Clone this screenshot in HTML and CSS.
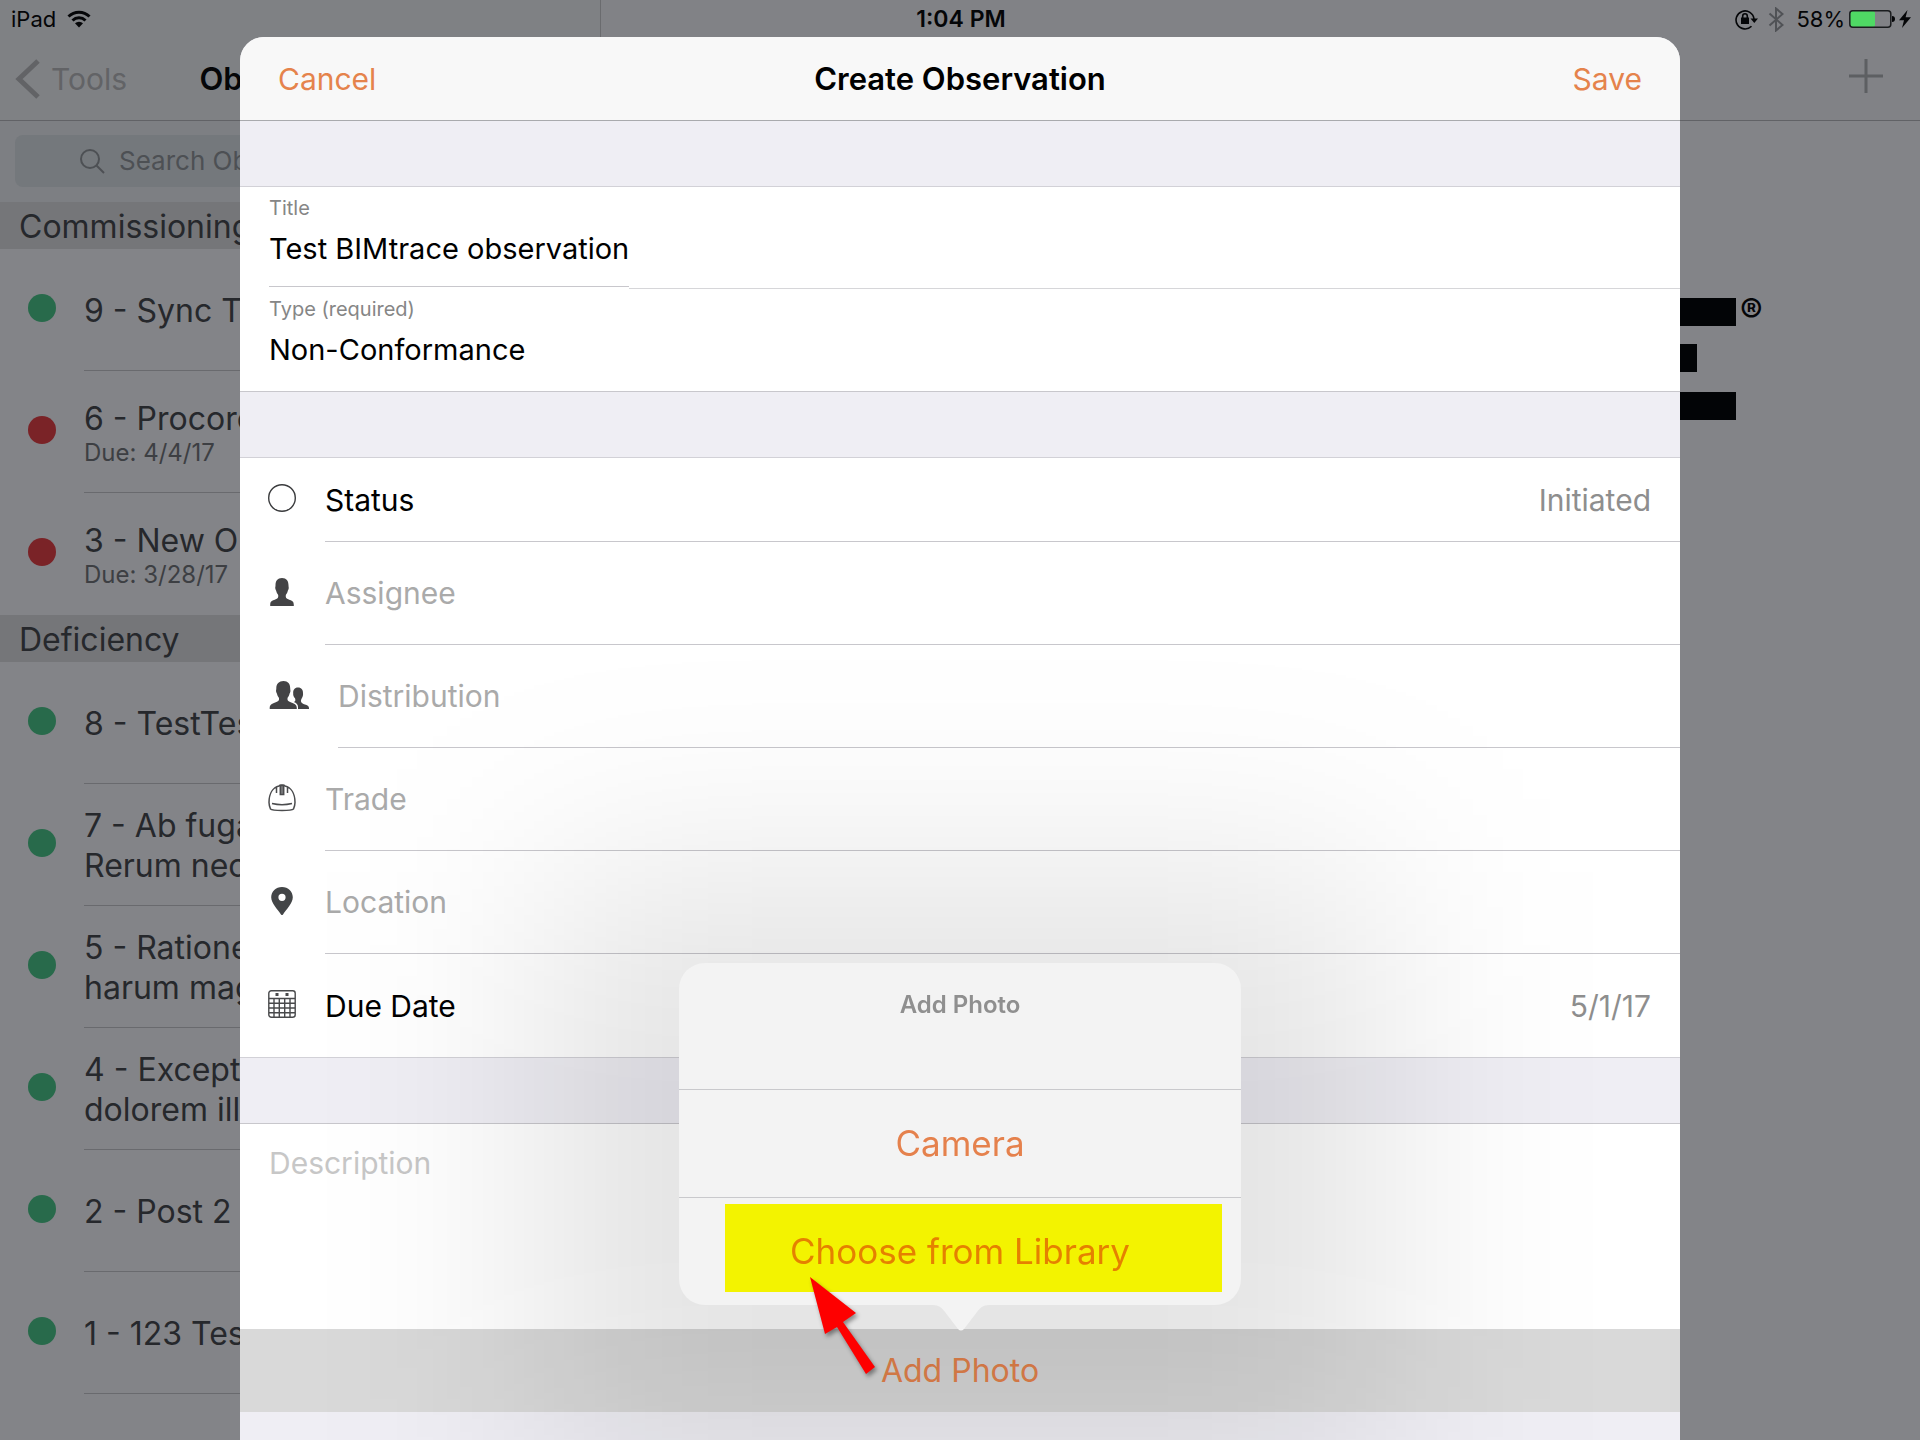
FILE: index.html
```html
<!DOCTYPE html>
<html lang="en">
<head>
<meta charset="utf-8">
<title>Create Observation</title>
<link rel="stylesheet" href="styles.css">
</head>
<body>
<div class="app">
  <header class="top">
    <div class="status-bar">
      <div class="status-left">
        <span>iPad</span>
        <svg width="24" height="18" viewBox="0 0 24 18" fill="none" stroke="#050608" stroke-width="3"><path d="M1.5 6.5a15 15 0 0 1 21 0M5.5 10.5a9.3 9.3 0 0 1 13 0"/><path d="M12 17.5l-4-4.200a5.700 5.700 0 0 1 8 0z" fill="#050608" stroke="none"/></svg>
      </div>
      <div class="status-time">1:04 PM</div>
      <div class="status-right">
        <svg width="23" height="22" viewBox="0 0 23 22" fill="none" stroke="#050608" stroke-width="1.600"><path d="M16.500 18.200A9 9 0 1 1 19 11"/><path d="M15.500 10.500h7.500l-3.700 4.500z" fill="#050608" stroke="none"/><path d="M6 9.500h8v6.500H6z" fill="#050608" stroke="none"/><path d="M7.700 10V8a2.300 2.300 0 0 1 4.600 0v2" stroke-width="1.600"/></svg>
        <svg width="16" height="25" viewBox="0 0 16 25" fill="none" stroke="#505256" stroke-width="2"><path d="M1.500 6.500l13 11.500L8 23.500v-22L14.500 7l-13 11.500"/></svg>
        <span class="percent">58%</span>
        <svg width="46" height="18" viewBox="0 0 46 18"><rect x="1" y="1" width="25" height="16" rx="2" fill="#4fd964"/><rect x=".8" y=".8" width="41" height="16.400" rx="3" fill="none" stroke="#1b1d1f" stroke-width="1.500"/><path d="M43 6q3 0 3 3t-3 3z" fill="#050608"/></svg>
        <svg width="12" height="18" viewBox="0 0 12 18"><path d="M8.500 0L0 10.300h5L3 18l9-10.800H6.600z" fill="#050608"/></svg>
      </div>
    </div>
    <nav class="nav">
      <div class="nav-side">
        <button class="back" type="button">
          <svg width="26" height="40" viewBox="0 0 26 40" fill="none" stroke="currentColor" stroke-width="5"><path d="M23 2L4 20l19 18"/></svg>
          <span>Tools</span>
        </button>
        <h2 class="nav-title">Observations</h2>
      </div>
      <button class="add" type="button" aria-label="Add"><svg width="34" height="34" viewBox="0 0 34 34" stroke="#5d5f62" stroke-width="3"><path d="M17 0v34M0 17h34"/></svg></button>
    </nav>
  </header>
  <div class="panes">
    <aside class="sidebar">
      <div class="search">
        <label class="search-box">
          <svg width="25" height="25" viewBox="0 0 25 25" fill="none" stroke="#4d5054" stroke-width="2"><circle cx="10" cy="10" r="9"/><path d="M16.500 16.500l7.500 7.500"/></svg>
          <input type="search" placeholder="Search Observations" aria-label="Search Observations">
        </label>
      </div>
      <h3 class="group">Commissioning</h3>
      <ul class="list">
        <li class="item"><span class="dot"></span><div class="item-body"><p>9 - Sync T</p></div></li>
        <li class="item"><span class="dot late"></span><div class="item-body"><p>6 - Procore</p><small>Due: 4/4/17</small></div></li>
        <li class="item"><span class="dot late"></span><div class="item-body last"><p>3 - New Obs</p><small>Due: 3/28/17</small></div></li>
      </ul>
      <h3 class="group">Deficiency</h3>
      <ul class="list">
        <li class="item"><span class="dot"></span><div class="item-body"><p>8 - TestTest</p></div></li>
        <li class="item"><span class="dot"></span><div class="item-body"><p>7 - Ab fuga<br>Rerum nec</p></div></li>
        <li class="item"><span class="dot"></span><div class="item-body"><p>5 - Ratione<br>harum magni</p></div></li>
        <li class="item"><span class="dot"></span><div class="item-body"><p>4 - Excepturi<br>dolorem illum</p></div></li>
        <li class="item"><span class="dot"></span><div class="item-body"><p>2 - Post 2</p></div></li>
        <li class="item"><span class="dot"></span><div class="item-body"><p>1 - 123 Test</p></div></li>
      </ul>
    </aside>
    <main class="detail">
      <div class="brand"><span class="bar wide"></span><span class="reg">®</span></div>
      <span class="bar short"></span>
      <span class="bar wide"></span>
    </main>
  </div>
</div>

<form class="modal">
  <header class="modal-head">
    <button type="button" class="link">Cancel</button>
    <h1>Create Observation</h1>
    <button type="button" class="link">Save</button>
  </header>
  <div class="spacer"></div>
  <div class="title-row">
    <div class="title-field">
      <label for="title">Title</label>
      <input id="title" type="text" value="Test BIMtrace observation">
    </div>
    <div class="title-rest"></div>
  </div>
  <div class="type-row">
    <label for="type">Type (required)</label>
    <input id="type" type="text" value="Non-Conformance">
  </div>
  <div class="spacer"></div>
  <section class="rows">
    <div class="row compact">
      <svg width="28" height="28" viewBox="0 0 28 28"><circle cx="14" cy="14" r="13.300" fill="none" stroke="#3a3b3d" stroke-width="1.400"/></svg>
      <div class="row-body"><label for="status">Status</label><input id="status" class="value" type="text" value="Initiated"></div>
    </div>
    <div class="row">
      <svg width="28" height="28" viewBox="0 0 28 28" fill="#434345"><path d="M14 0c4.500 0 6.500 3 6.500 7.200 0 1.500.4 1.800.2 3.300-.2 1.300-.8 1.500-1 2.700-.4 1.700-1.400 2.800-1.900 3.800-.3 2.600.4 3.600 3 4.600 3 1.200 5 1.600 5 5.400v1H2.200v-1c0-3.800 2-4.200 5-5.400 2.600-1 3.300-2 3-4.600-.5-1-1.500-2.100-1.900-3.800-.2-1.200-.8-1.400-1-2.700-.2-1.500.2-1.800.2-3.300C7.500 3 9.500 0 14 0z"/></svg>
      <div class="row-body"><input type="text" placeholder="Assignee" aria-label="Assignee"></div>
    </div>
    <div class="row">
      <svg width="41" height="28" viewBox="0 0 41 28" fill="#434345"><path d="M15.500 0c4.500 0 6.700 3 6.700 7.200 0 1.500.4 1.800.2 3.300-.2 1.300-.8 1.500-1 2.700-.4 1.700-1.400 2.800-1.900 3.800-.3 2.600.6 3.300 3.200 4.300 3.400 1.400 6.100 2 6.100 5.700v1H1.700v-1c0-3.700 2.700-4.300 6.100-5.700 2.600-1 3.500-1.700 3.200-4.300-.5-1-1.500-2.100-1.900-3.800-.2-1.200-.8-1.400-1-2.700-.2-1.500.2-1.800.2-3.300C8.300 3 11 0 15.500 0z"/><path d="M30 6.500c3.500 0 5.200 2.500 5 5.700.3 2-.4 3.800-1.200 5-.7 1.300-1 2-.8 3.300.3 1.700 1.900 2.200 3.900 2.900 2.400.8 4.100 1.600 4.100 3.600v1H30v-2c0-2.500-1.600-3.900-4.200-4.900 1.600-.7 1.900-2 1.200-3.900-1.300-1.300-2-3-1.800-5-.2-3.200 1.300-5.700 4.800-5.700z"/></svg>
      <div class="row-body"><input type="text" placeholder="Distribution" aria-label="Distribution"></div>
    </div>
    <div class="row">
      <svg width="28" height="28" viewBox="0 0 28 28" fill="none" stroke="#4b4c4e" stroke-width="1.500"><path d="M1 18.500C1 9.500 5 3.500 11 2c1-1.500 5-1.500 6 0 6 1.500 10 7.500 10 16.500 0 2-.5 4-1.500 6.500-2 2-21 2-23 0-1-2.500-1.500-4.500-1.500-6.500zM4 19.500c6 1.400 14 1.400 20 0M8.500 3.500V9M19.500 3.500V9"/><path d="M12.300 1.500h3.400v9h-3.400z" fill="#77787a"/></svg>
      <div class="row-body"><input type="text" placeholder="Trade" aria-label="Trade"></div>
    </div>
    <div class="row">
      <svg width="28" height="28" viewBox="0 0 28 28"><path fill="#434547" fill-rule="evenodd" d="M14 0c6.200 0 10.800 4.500 10.800 10.300 0 6-6.600 12.200-9.800 17.200q-1 1-2 0C9.800 22.500 3.200 16.300 3.200 10.300 3.200 4.500 7.800 0 14 0zm0 6.700a3.600 3.600 0 1 0 0 7.200 3.600 3.600 0 0 0 0-7.200z"/></svg>
      <div class="row-body"><input type="text" placeholder="Location" aria-label="Location"></div>
    </div>
    <div class="row">
      <svg width="28" height="28" viewBox="0 0 28 28" fill="none" stroke="#48494b" stroke-width="1.400"><rect x=".8" y=".8" width="26.400" height="26.400" rx="2.500"/><path d="M1 8.500h26M1 13.200h26M1 18h26M1 22.700h26M6 8.500V27M11.300 8.500V27M16.700 8.500V27M22 8.500V27"/><path d="M7.500 4.500h3M17.500 4.500h3" stroke-width="3"/></svg>
      <div class="row-body last"><label for="due">Due Date</label><input id="due" class="value" type="text" value="5/1/17"></div>
    </div>
  </section>
  <div class="spacer"></div>
  <textarea class="description" placeholder="Description" aria-label="Description"></textarea>
  <div class="photo">
    <button type="button" class="photo-button">Add Photo</button>
    <div class="popover-shadow"></div>
    <div class="popover" role="dialog" aria-label="Add Photo">
      <h2>Add Photo</h2>
      <button type="button">Camera</button>
      <button type="button" class="library">Choose from Library<span class="highlight"></span></button>
      <svg class="tail" width="56" height="26" viewBox="0 0 56 26"><path d="M0 0h56c-6 0-9 3-12 7L31 24q-3 3-6 0L12 7C9 3 6 0 0 0z" fill="#f3f3f3"/></svg>
      <svg class="pointer" width="72" height="104" viewBox="0 0 72 104"><path d="M0 0l46 36-13 9 32 45-9 7-29-47-12 7z" fill="#fe0000"/></svg>
    </div>
  </div>
</form>
</body>
</html>
```
FILE: styles.css
```css
* { box-sizing: border-box; }

body {
  margin: 0;
  min-height: 100vh;
  position: relative;
  overflow: hidden;
  background: #838488;
  color: #26282c;
  font-family: Inter, "Liberation Sans", sans-serif;
  font-size: 30px;
  line-height: 40px;
}

h1, h2, h3, p, ul { margin: 0; padding: 0; font-weight: 400; }
ul { list-style: none; }
svg { display: block; flex: none; }

button, input, textarea {
  margin: 0;
  padding: 0;
  border: 0;
  background: none;
  font: inherit;
  color: inherit;
  outline: 0;
}

/* Dimmed page behind the sheet */
.top {
  height: 121px;
  background: linear-gradient(to right, #7f8184 600px, #6a6b6e 600px, #6a6b6e 601px, #818286 601px);
  border-bottom: 1px solid #616266;
}

.status-bar {
  display: grid;
  grid-template-columns: 1fr auto 1fr;
  align-items: center;
  height: 38px;
  padding: 0 9px 0 11px;
  font-size: 22px;
  line-height: 28px;
  color: #050608;
}
.status-left, .status-right { display: flex; align-items: center; gap: 11px; }
.status-right { justify-content: flex-end; gap: 4px; }
.status-right .percent { margin-left: 8px; }
.status-right svg:first-child { margin-right: 6px; }
.status-time { font-size: 23px; font-weight: 600; }

.nav { display: flex; justify-content: space-between; align-items: center; height: 82px; }
.nav-side { display: grid; grid-template-columns: 1fr auto 1fr; align-items: center; width: 600px; }
.back { display: flex; align-items: center; gap: 10px; padding-left: 15px; color: #626366; }
.nav-title { font-size: 31px; font-weight: 600; color: #050608; }
.add { padding: 0 37px 6px 0; }

.panes { display: flex; }
.sidebar { width: 600px; }
.search { padding: 14px 15px 15px; background: #7d7f83; }
.search-box {
  display: flex;
  align-items: center;
  gap: 14px;
  height: 52px;
  padding-left: 65px;
  border-radius: 8px;
  background: #74787c;
}
.search-box input { flex: 1; font-size: 26px; }
.search-box input::placeholder { color: #4d5054; opacity: 1; }

.group { height: 47px; padding: 0 19px; font-size: 32px; line-height: 50px; background: #757679; }
.item { display: flex; align-items: center; gap: 28px; padding-left: 28px; }
.dot { width: 28px; height: 28px; border-radius: 50%; background: #286a4b; margin-bottom: 4px; }
.dot.late { background: #7a2327; }
.item-body {
  flex: 1;
  display: flex;
  flex-direction: column;
  justify-content: center;
  height: 122px;
  padding-top: 2px;
  border-bottom: 1px solid #696a6e;
  font-size: 32px;
  white-space: nowrap;
}
.item-body.last { border-bottom: 0; }
.item-body small { font-size: 24px; line-height: 28px; color: #3d3f43; }

.detail { display: flex; flex-direction: column; align-items: flex-start; gap: 20px; padding: 177px 0 0 800px; }
.brand { display: flex; gap: 4px; height: 26px; }
.bar { width: 297px; height: 28px; background: #020406; }
.bar.wide { width: 336px; }
.reg { font-size: 34px; line-height: 26px; font-weight: 600; color: #050608; }

/* Sheet */
.modal {
  position: absolute;
  top: 37px;
  left: 12.5%;
  right: 12.5%;
  min-height: calc(100vh - 37px);
  overflow: hidden;
  border-radius: 24px 24px 0 0;
  background: #efeef4;
  color: #000;
}
.modal-head {
  display: grid;
  grid-template-columns: 1fr auto 1fr;
  align-items: center;
  height: 84px;
  padding: 0 38px;
  background: #f8f8f8;
  border-bottom: 1px solid #a9aaad;
}
.modal-head h1 { font-size: 31px; font-weight: 600; }
.link { justify-self: start; color: #e5834c; }
.link:last-child { justify-self: end; }

.spacer { height: 65px; }
.title-row, .type-row, .rows { background: #fff; }

label, input { display: block; }
.title-row { display: flex; padding-left: 29px; height: 103px; border-top: 1px solid #d2d1d7; }
.title-field { width: 360px; height: 100px; padding-top: 9px; border-bottom: 1px solid #c8c7cc; }
.title-rest { flex: 1; border-bottom: 1px solid #d6d6d9; }
.type-row { height: 103px; padding: 8px 29px 0; border-bottom: 1px solid #c8c7cc; }
.title-field label, .type-row label { font-size: 20px; line-height: 24px; color: #868686; }
.title-field input, .type-row input { width: 100%; height: 40px; margin-top: 9px; font-size: 29px; }

.rows { border: solid #d2d1d7; border-width: 1px 0; }
.row { display: flex; align-items: center; gap: 29px; height: 103px; padding-left: 28px; }
.row.compact { height: 84px; }
.row > svg { margin-bottom: 4px; }
.row-body {
  flex: 1;
  display: flex;
  align-items: center;
  justify-content: space-between;
  align-self: stretch;
  padding-right: 29px;
  border-bottom: 1px solid #c8c7cc;
}
.row-body.last { border-bottom: 0; }
.row-body input { flex: 1; min-width: 0; }
.row-body input::placeholder { color: #aaa; opacity: 1; }
.row-body .value { text-align: right; color: #8e8e8e; }

.description {
  display: block;
  width: 100%;
  height: 206px;
  padding: 19px 29px;
  border-top: 1px solid #c8c7cc;
  background: #fff;
  resize: none;
}
.description::placeholder { color: #c7c7c7; opacity: 1; }

.photo { position: relative; }
.photo-button { display: block; width: 100%; height: 83px; background: #d9d9d9; font-size: 32px; color: #e5834c; }

.popover-shadow {
  position: absolute;
  bottom: -60px;
  left: 50%;
  width: 842px;
  height: 600px;
  margin-left: -421px;
  background: rgba(0, 0, 0, .11);
  filter: blur(110px);
  pointer-events: none;
}
.popover {
  position: absolute;
  z-index: 1;
  bottom: calc(100% + 24px);
  left: 50%;
  width: 562px;
  margin-left: -281px;
  border-radius: 26px;
  background: #f3f3f3;
}
.popover h2 { height: 126px; padding-top: 22px; font-size: 24px; font-weight: 600; color: #8f8f8f; text-align: center; }
.popover button {
  position: relative;
  display: block;
  width: 100%;
  height: 108px;
  padding-bottom: 2px;
  border-top: 1px solid #c9c9cc;
  font-size: 35px;
  color: #e5814c;
}
.highlight {
  position: absolute;
  inset: 6px 19px 13px 46px;
  background: #ff0;
  mix-blend-mode: multiply;
}
.tail { position: absolute; top: 100%; left: 254px; }
.pointer { position: absolute; top: 314px; left: 131px; filter: drop-shadow(2px 3px 2px rgba(0, 0, 0, .4)); }
```
